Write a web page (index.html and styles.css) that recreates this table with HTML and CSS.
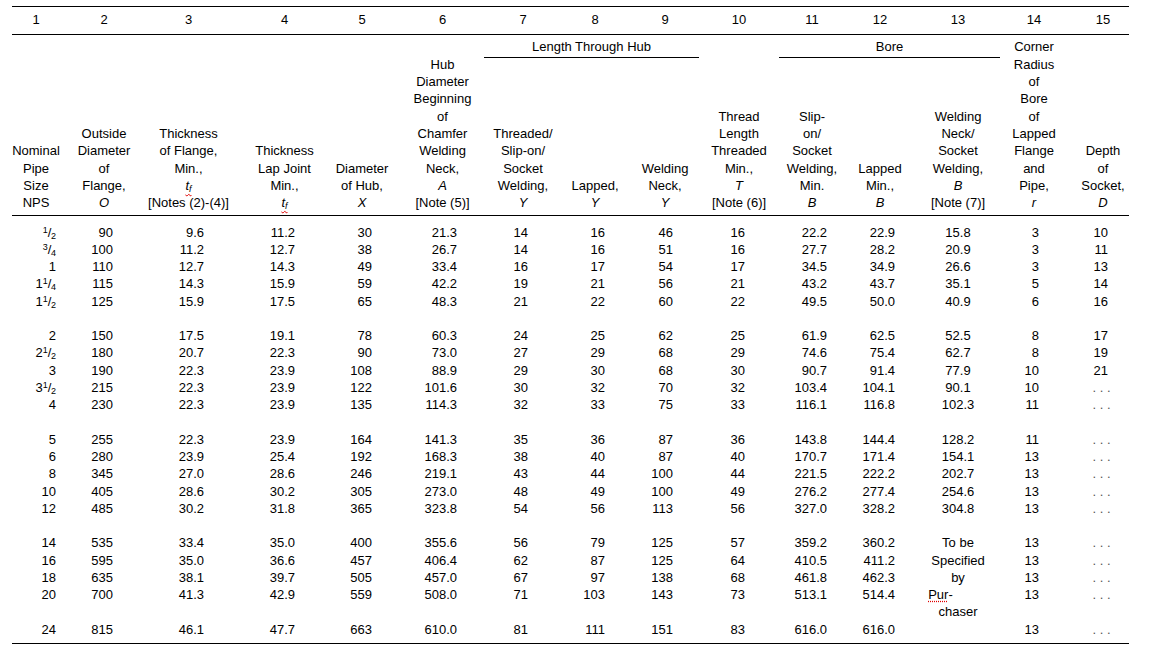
FILE: index.html
```html
<!DOCTYPE html>
<html lang="en">
<head>
<meta charset="utf-8">
<title>Flange Dimensions</title>
<link rel="stylesheet" href="styles.css">
</head>
<body>
<table class="flange">
  <colgroup>
    <col class="w1"><col class="w2"><col class="w3"><col class="w4"><col class="w5">
    <col class="w6"><col class="w7"><col class="w8"><col class="w9"><col class="w10">
    <col class="w11"><col class="w12"><col class="w13"><col class="w14"><col class="w15">
  </colgroup>
  <thead>
    <tr class="nums">
      <th class="c1">1</th><th class="c2">2</th><th class="c3">3</th><th class="c4">4</th><th class="c5">5</th>
      <th class="c6">6</th><th class="c7">7</th><th class="c8">8</th><th class="c9">9</th><th class="c10">10</th>
      <th class="c11">11</th><th class="c12">12</th><th class="c13">13</th><th class="c14">14</th><th class="c15">15</th>
    </tr>
    <tr class="heads">
      <th class="c1">Nominal<br>Pipe<br>Size<br>NPS</th>
      <th class="c2">Outside<br>Diameter<br>of<br>Flange,<br><i>O</i></th>
      <th class="c3">Thickness<br>of Flange,<br>Min.,<br><i class="tf">t<sub>f</sub></i><br>[Notes (2)-(4)]</th>
      <th class="c4">Thickness<br>Lap Joint<br>Min.,<br><i class="tf">t<sub>f</sub></i></th>
      <th class="c5">Diameter<br>of Hub,<br><i>X</i></th>
      <th class="c6">Hub<br>Diameter<br>Beginning<br>of<br>Chamfer<br>Welding<br>Neck,<br><i>A</i><br>[Note (5)]</th>
      <th class="grp" colspan="3">
        <div class="grp-in">
          <div class="grp-label">Length Through Hub</div>
          <div class="grp-cols len">
            <div class="c7">Threaded/<br>Slip-on/<br>Socket<br>Welding,<br><i>Y</i></div>
            <div class="c8">Lapped,<br><i>Y</i></div>
            <div class="c9">Welding<br>Neck,<br><i>Y</i></div>
          </div>
        </div>
      </th>
      <th class="c10">Thread<br>Length<br>Threaded<br>Min.,<br><i>T</i><br>[Note (6)]</th>
      <th class="grp" colspan="3">
        <div class="grp-in">
          <div class="grp-label">Bore</div>
          <div class="grp-cols bore">
            <div class="c11">Slip-<br>on/<br>Socket<br>Welding,<br>Min.<br><i>B</i></div>
            <div class="c12">Lapped<br>Min.,<br><i>B</i></div>
            <div class="c13">Welding<br>Neck/<br>Socket<br>Welding,<br><i>B</i><br>[Note (7)]</div>
          </div>
        </div>
      </th>
      <th class="c14">Corner<br>Radius<br>of<br>Bore<br>of<br>Lapped<br>Flange<br>and<br>Pipe,<br><i>r</i></th>
      <th class="c15">Depth<br>of<br>Socket,<br><i>D</i></th>
    </tr>
  </thead>
  <tbody>
    <tr class="first"><td class="c1"><span class="fr"><sup>1</sup>/<sub>2</sub></span></td><td class="c2">90</td><td class="c3">9.6</td><td class="c4">11.2</td><td class="c5">30</td><td class="c6">21.3</td><td class="c7">14</td><td class="c8">16</td><td class="c9">46</td><td class="c10">16</td><td class="c11">22.2</td><td class="c12">22.9</td><td class="c13">15.8</td><td class="c14">3</td><td class="c15">10</td></tr>
    <tr><td class="c1"><span class="fr"><sup>3</sup>/<sub>4</sub></span></td><td class="c2">100</td><td class="c3">11.2</td><td class="c4">12.7</td><td class="c5">38</td><td class="c6">26.7</td><td class="c7">14</td><td class="c8">16</td><td class="c9">51</td><td class="c10">16</td><td class="c11">27.7</td><td class="c12">28.2</td><td class="c13">20.9</td><td class="c14">3</td><td class="c15">11</td></tr>
    <tr><td class="c1">1</td><td class="c2">110</td><td class="c3">12.7</td><td class="c4">14.3</td><td class="c5">49</td><td class="c6">33.4</td><td class="c7">16</td><td class="c8">17</td><td class="c9">54</td><td class="c10">17</td><td class="c11">34.5</td><td class="c12">34.9</td><td class="c13">26.6</td><td class="c14">3</td><td class="c15">13</td></tr>
    <tr><td class="c1">1<span class="fr"><sup>1</sup>/<sub>4</sub></span></td><td class="c2">115</td><td class="c3">14.3</td><td class="c4">15.9</td><td class="c5">59</td><td class="c6">42.2</td><td class="c7">19</td><td class="c8">21</td><td class="c9">56</td><td class="c10">21</td><td class="c11">43.2</td><td class="c12">43.7</td><td class="c13">35.1</td><td class="c14">5</td><td class="c15">14</td></tr>
    <tr><td class="c1">1<span class="fr"><sup>1</sup>/<sub>2</sub></span></td><td class="c2">125</td><td class="c3">15.9</td><td class="c4">17.5</td><td class="c5">65</td><td class="c6">48.3</td><td class="c7">21</td><td class="c8">22</td><td class="c9">60</td><td class="c10">22</td><td class="c11">49.5</td><td class="c12">50.0</td><td class="c13">40.9</td><td class="c14">6</td><td class="c15">16</td></tr>
    <tr class="gap"><td colspan="15"></td></tr>
    <tr><td class="c1">2</td><td class="c2">150</td><td class="c3">17.5</td><td class="c4">19.1</td><td class="c5">78</td><td class="c6">60.3</td><td class="c7">24</td><td class="c8">25</td><td class="c9">62</td><td class="c10">25</td><td class="c11">61.9</td><td class="c12">62.5</td><td class="c13">52.5</td><td class="c14">8</td><td class="c15">17</td></tr>
    <tr><td class="c1">2<span class="fr"><sup>1</sup>/<sub>2</sub></span></td><td class="c2">180</td><td class="c3">20.7</td><td class="c4">22.3</td><td class="c5">90</td><td class="c6">73.0</td><td class="c7">27</td><td class="c8">29</td><td class="c9">68</td><td class="c10">29</td><td class="c11">74.6</td><td class="c12">75.4</td><td class="c13">62.7</td><td class="c14">8</td><td class="c15">19</td></tr>
    <tr><td class="c1">3</td><td class="c2">190</td><td class="c3">22.3</td><td class="c4">23.9</td><td class="c5">108</td><td class="c6">88.9</td><td class="c7">29</td><td class="c8">30</td><td class="c9">68</td><td class="c10">30</td><td class="c11">90.7</td><td class="c12">91.4</td><td class="c13">77.9</td><td class="c14">10</td><td class="c15">21</td></tr>
    <tr><td class="c1">3<span class="fr"><sup>1</sup>/<sub>2</sub></span></td><td class="c2">215</td><td class="c3">22.3</td><td class="c4">23.9</td><td class="c5">122</td><td class="c6">101.6</td><td class="c7">30</td><td class="c8">32</td><td class="c9">70</td><td class="c10">32</td><td class="c11">103.4</td><td class="c12">104.1</td><td class="c13">90.1</td><td class="c14">10</td><td class="c15 dots">. . .</td></tr>
    <tr><td class="c1">4</td><td class="c2">230</td><td class="c3">22.3</td><td class="c4">23.9</td><td class="c5">135</td><td class="c6">114.3</td><td class="c7">32</td><td class="c8">33</td><td class="c9">75</td><td class="c10">33</td><td class="c11">116.1</td><td class="c12">116.8</td><td class="c13">102.3</td><td class="c14">11</td><td class="c15 dots">. . .</td></tr>
    <tr class="gap"><td colspan="15"></td></tr>
    <tr><td class="c1">5</td><td class="c2">255</td><td class="c3">22.3</td><td class="c4">23.9</td><td class="c5">164</td><td class="c6">141.3</td><td class="c7">35</td><td class="c8">36</td><td class="c9">87</td><td class="c10">36</td><td class="c11">143.8</td><td class="c12">144.4</td><td class="c13">128.2</td><td class="c14">11</td><td class="c15 dots">. . .</td></tr>
    <tr><td class="c1">6</td><td class="c2">280</td><td class="c3">23.9</td><td class="c4">25.4</td><td class="c5">192</td><td class="c6">168.3</td><td class="c7">38</td><td class="c8">40</td><td class="c9">87</td><td class="c10">40</td><td class="c11">170.7</td><td class="c12">171.4</td><td class="c13">154.1</td><td class="c14">13</td><td class="c15 dots">. . .</td></tr>
    <tr><td class="c1">8</td><td class="c2">345</td><td class="c3">27.0</td><td class="c4">28.6</td><td class="c5">246</td><td class="c6">219.1</td><td class="c7">43</td><td class="c8">44</td><td class="c9">100</td><td class="c10">44</td><td class="c11">221.5</td><td class="c12">222.2</td><td class="c13">202.7</td><td class="c14">13</td><td class="c15 dots">. . .</td></tr>
    <tr><td class="c1">10</td><td class="c2">405</td><td class="c3">28.6</td><td class="c4">30.2</td><td class="c5">305</td><td class="c6">273.0</td><td class="c7">48</td><td class="c8">49</td><td class="c9">100</td><td class="c10">49</td><td class="c11">276.2</td><td class="c12">277.4</td><td class="c13">254.6</td><td class="c14">13</td><td class="c15 dots">. . .</td></tr>
    <tr><td class="c1">12</td><td class="c2">485</td><td class="c3">30.2</td><td class="c4">31.8</td><td class="c5">365</td><td class="c6">323.8</td><td class="c7">54</td><td class="c8">56</td><td class="c9">113</td><td class="c10">56</td><td class="c11">327.0</td><td class="c12">328.2</td><td class="c13">304.8</td><td class="c14">13</td><td class="c15 dots">. . .</td></tr>
    <tr class="gap"><td colspan="15"></td></tr>
    <tr><td class="c1">14</td><td class="c2">535</td><td class="c3">33.4</td><td class="c4">35.0</td><td class="c5">400</td><td class="c6">355.6</td><td class="c7">56</td><td class="c8">79</td><td class="c9">125</td><td class="c10">57</td><td class="c11">359.2</td><td class="c12">360.2</td><td class="c13 spec" rowspan="5">To be<br>Specified<br>by<br><span class="pur"><span class="squig">Pur</span>-</span><br>chaser</td><td class="c14">13</td><td class="c15 dots">. . .</td></tr>
    <tr><td class="c1">16</td><td class="c2">595</td><td class="c3">35.0</td><td class="c4">36.6</td><td class="c5">457</td><td class="c6">406.4</td><td class="c7">62</td><td class="c8">87</td><td class="c9">125</td><td class="c10">64</td><td class="c11">410.5</td><td class="c12">411.2</td><td class="c14">13</td><td class="c15 dots">. . .</td></tr>
    <tr><td class="c1">18</td><td class="c2">635</td><td class="c3">38.1</td><td class="c4">39.7</td><td class="c5">505</td><td class="c6">457.0</td><td class="c7">67</td><td class="c8">97</td><td class="c9">138</td><td class="c10">68</td><td class="c11">461.8</td><td class="c12">462.3</td><td class="c14">13</td><td class="c15 dots">. . .</td></tr>
    <tr><td class="c1">20</td><td class="c2">700</td><td class="c3">41.3</td><td class="c4">42.9</td><td class="c5">559</td><td class="c6">508.0</td><td class="c7">71</td><td class="c8">103</td><td class="c9">143</td><td class="c10">73</td><td class="c11">513.1</td><td class="c12">514.4</td><td class="c14">13</td><td class="c15 dots">. . .</td></tr>
    <tr class="gap"><td colspan="12"></td><td colspan="2"></td></tr>
    <tr class="last"><td class="c1">24</td><td class="c2">815</td><td class="c3">46.1</td><td class="c4">47.7</td><td class="c5">663</td><td class="c6">610.0</td><td class="c7">81</td><td class="c8">111</td><td class="c9">151</td><td class="c10">83</td><td class="c11">616.0</td><td class="c12">616.0</td><td class="c13"></td><td class="c14">13</td><td class="c15 dots">. . .</td></tr>
  </tbody>
</table>
</body>
</html>
```

FILE: styles.css
```css
body {
  margin: 0;
  background: #ffffff;
  color: #000000;
  font-family: "Liberation Sans", Arial, sans-serif;
  font-size: 13px;
}

.flange {
  margin: 6px 0 0 12px;
  width: 1117px;
  table-layout: fixed;
  border-collapse: separate;
  border-spacing: 0;
}

.flange th,
.flange td {
  padding: 0;
  box-sizing: border-box;
  font-weight: normal;
  white-space: nowrap;
}

.w1 { width: 54px; }
.w2 { width: 80px; }
.w3 { width: 90px; }
.w4 { width: 86px; }
.w5 { width: 80px; }
.w6 { width: 81px; }
.w7 { width: 77px; }
.w8 { width: 70px; }
.w9 { width: 70px; }
.w10 { width: 78px; }
.w11 { width: 68px; }
.w12 { width: 73px; }
.w13 { width: 82px; }
.w14 { width: 66px; }
.w15 { width: 62px; }

/* column-number row */
.nums th {
  border-top: 1px solid #000;
  border-bottom: 1px solid #000;
  padding-top: 3.8px;
  padding-bottom: 5.9px;
  line-height: 17.33px;
  text-align: center;
  vertical-align: middle;
}

/* header captions */
.heads th {
  line-height: 17.33px;
  text-align: center;
  vertical-align: bottom;
  padding-top: 3.3px;
  padding-bottom: 3.4px;
  border-bottom: 1px solid #000;
}

.grp-in {
  height: 173.4px;
  display: flex;
  flex-direction: column;
}

.grp-label {
  padding-bottom: 1.4px;
  border-bottom: 1px solid #000;
  margin: 0 1px;
}

.grp-cols {
  flex: 1;
  display: grid;
  align-items: end;
}

.len { grid-template-columns: 77px 70px 70px; }
.bore { grid-template-columns: 68px 73px 82px; }

.tf {
  text-decoration: underline wavy #e00000;
  text-decoration-thickness: 1px;
  text-underline-offset: 2px;
}

.tf sub {
  font-size: 9px;
  line-height: 0;
  vertical-align: -2px;
}

/* header centring offsets */
.flange thead .c1 { padding-right: 6px; }
.flange thead .c2 { padding-right: 4px; }
.flange thead .c3 { padding-right: 5px; }
.flange thead .c4 { padding-left: 11px; }
.flange thead .c7 { padding-left: 3px; }
.flange thead .c12 { padding-right: 5px; }
.flange thead .c13 { padding-right: 4px; }
.flange thead .c15 { padding-left: 10px; }

/* data */
.flange tbody td {
  line-height: 17.26px;
  text-align: right;
  vertical-align: top;
}

.flange tbody tr.first td { padding-top: 7.5px; }
.flange tbody tr.last td {
  padding-bottom: 5.5px;
  border-bottom: 1px solid #000;
}
.flange tbody tr.gap td { height: 17.26px; }

.flange tbody .c1 { padding-right: 10px; }
.flange tbody .c2 { padding-right: 33px; }
.flange tbody .c3 { padding-right: 32px; }
.flange tbody .c4 { padding-right: 27px; }
.flange tbody .c5 { padding-right: 30px; }
.flange tbody .c6 { padding-right: 26px; }
.flange tbody .c7 { padding-right: 32px; }
.flange tbody .c8 { padding-right: 25px; }
.flange tbody .c9 { padding-right: 27px; }
.flange tbody .c10 { padding-right: 33px; }
.flange tbody .c11 { padding-right: 19px; }
.flange tbody .c12 { padding-right: 24px; }
.flange tbody .c13 { padding-right: 4px; text-align: center; }
.flange tbody .c14 { padding-right: 28px; }
.flange tbody .c15 { padding-right: 21px; }
.flange tbody .dots { padding-right: 18.5px; color: #555; }

/* stacked vulgar fractions */
.fr {
  letter-spacing: -0.3px;
}
.fr sup,
.fr sub {
  font-size: 9px;
  line-height: 0;
  letter-spacing: 0;
}
.fr sup { vertical-align: 3.6px; }
.fr sub { vertical-align: -2.2px; }

.pur { margin-right: 35px; }
.squig {
  text-decoration: underline dotted #e00000;
  text-underline-offset: 2px;
}
```
